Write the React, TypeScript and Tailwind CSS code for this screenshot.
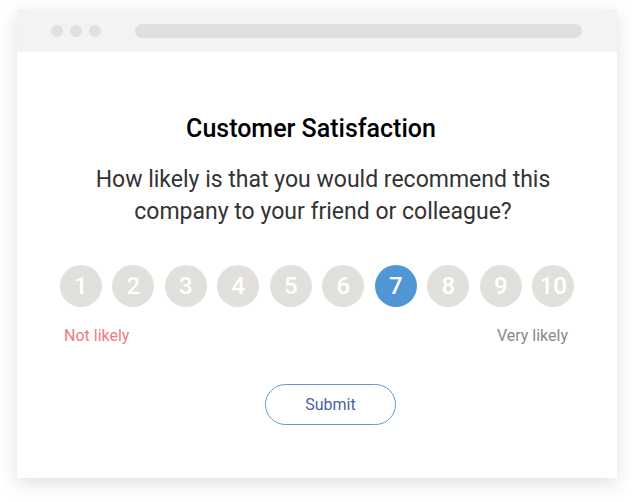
export default function App() {
  const scores = [1, 2, 3, 4, 5, 6, 7, 8, 9, 10];
  const selected = 7;
  return (
    <div className="w-[632px] h-[502px] bg-white pt-[9px] pl-[17px] font-['Roboto',sans-serif]">
      <div className="w-[600px] h-[469px] bg-white shadow-[0_6px_18px_rgba(0,0,0,0.12)] flex flex-col">
        {/* browser chrome */}
        <div className="h-[43px] bg-[#f3f3f3] flex items-center pl-[34px] pr-[35px]">
          <div className="flex gap-[7px]">
            <span className="w-[12px] h-[12px] rounded-full bg-[#e0e0e0]" />
            <span className="w-[12px] h-[12px] rounded-full bg-[#e0e0e0]" />
            <span className="w-[12px] h-[12px] rounded-full bg-[#e0e0e0]" />
          </div>
          <div className="ml-[34px] flex-1 h-[14px] rounded-full bg-[#e0e0e0]" />
        </div>

        <div className="flex flex-col items-center pt-[63px]">
          <h1 className="mr-[12px] text-[25px] leading-[28px] font-medium text-black">Customer Satisfaction</h1>
          <p className="ml-[12px] mt-[21px] text-[23px] leading-[32px] text-[#333] text-center">
            How likely is that you would recommend this
            <br />
            company to your friend or colleague?
          </p>

          <div className="mt-[37px] flex gap-[10.5px]">
            {scores.map((n) => (
              <div
                key={n}
                className={
                  n === selected
                    ? "w-[42px] h-[42px] rounded-full bg-[#5096d4] text-white flex items-center justify-center text-[24px] font-medium"
                    : "w-[42px] h-[42px] rounded-full bg-[#e1e0dc] text-white flex items-center justify-center text-[24px] font-medium"
                }
              >
                {n}
              </div>
            ))}
          </div>

          <div className="w-[504px] mr-[2px] mt-[19px] flex justify-between text-[16px] leading-[20px]">
            <span className="text-[#ef7c7c]">Not likely</span>
            <span className="text-[#8a8a8a]">Very likely</span>
          </div>

          <button className="ml-[27px] mt-[38px] w-[131px] h-[41px] rounded-full border border-[#5b9bd5] text-[#4a5ea8] text-[16px]">
            Submit
          </button>
        </div>
      </div>
    </div>
  );
}
